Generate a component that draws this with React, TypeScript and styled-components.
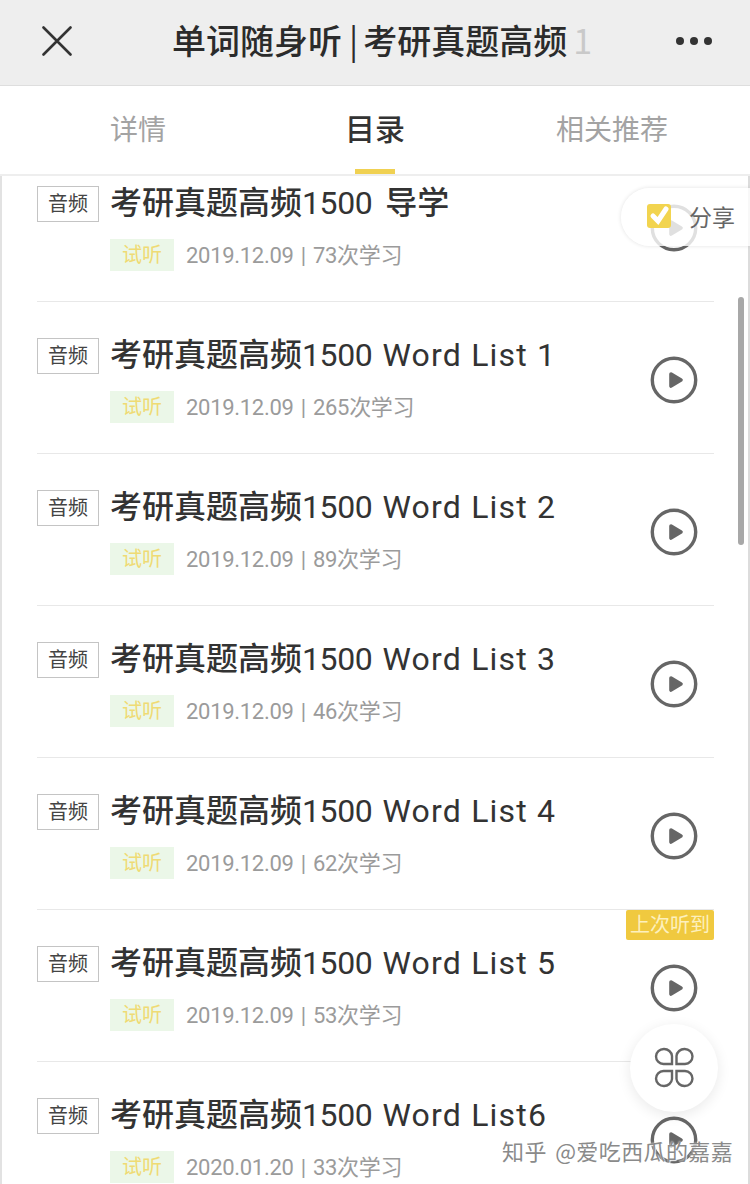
import React from 'react';
import styled, { createGlobalStyle } from 'styled-components';

const GlobalStyle = createGlobalStyle`
    html, body {
        margin: 0;
        padding: 0;
        background: #fff;
        font-family: Roboto, "Noto Sans CJK SC", "Liberation Sans", sans-serif;
    }
`;

// --- DATA ---
interface Lesson {
    name: string;
    date: string;
    count: number;
    lastHeard?: boolean;
}

const lessons: Lesson[] = [
    { name: '导学', date: '2019.12.09', count: 73 },
    { name: 'Word List 1', date: '2019.12.09', count: 265 },
    { name: 'Word List 2', date: '2019.12.09', count: 89 },
    { name: 'Word List 3', date: '2019.12.09', count: 46 },
    { name: 'Word List 4', date: '2019.12.09', count: 62 },
    { name: 'Word List 5', date: '2019.12.09', count: 53, lastHeard: true },
    { name: 'Word List6', date: '2020.01.20', count: 33 },
];

// --- STYLED COMPONENTS ---
const Page = styled.div`
    position: relative;
    display: flex;
    flex-direction: column;
    width: 750px;
    height: 1184px;
    overflow: hidden;
    background: #fff;
`;

const NavBar = styled.header`
    display: flex;
    align-items: center;
    flex-shrink: 0;
    height: 86px;
    padding: 0 38px 4px 42px;
    box-sizing: border-box;
    background: #eeeeee;
    border-bottom: 1px solid #dedede;
`;

const CloseIcon = styled.svg`
    flex-shrink: 0;
    width: 30px;
    height: 30px;
`;

const NavTitle = styled.div`
    margin-left: 100px;
    padding-bottom: 2px;
    font-family: "Noto Sans CJK SC", sans-serif;
    font-size: 34px;
    line-height: 46px;
    font-weight: 500;
    white-space: nowrap;
    color: #2b2b2b;
`;

const Divider = styled.span`
    margin: 0 5px 0 7px;
    font-weight: 400;
`;

const FadedChar = styled.span`
    margin-left: 6px;
    font-weight: 400;
    color: #c9c9c9;
`;

const MoreDots = styled.div`
    display: flex;
    gap: 6px;
    margin-left: auto;
`;

const Dot = styled.span`
    width: 8px;
    height: 8px;
    border-radius: 50%;
    background: #333;
`;

const TabRow = styled.nav`
    display: grid;
    grid-template-columns: repeat(3, 237px);
    justify-content: center;
    flex-shrink: 0;
    height: 90px;
    box-sizing: border-box;
    border-bottom: 2px solid #eeeeee;
`;

const TabItem = styled.div<{ $active?: boolean }>`
    position: relative;
    display: flex;
    justify-content: center;
    align-items: center;
    padding-bottom: ${p => (p.$active ? '7px' : '5px')};
    font-family: "Noto Sans CJK SC", sans-serif;
    font-size: ${p => (p.$active ? '30px' : '28px')};
    font-weight: ${p => (p.$active ? 500 : 400)};
    color: ${p => (p.$active ? '#333' : '#a3a3a3')};

    &::after {
        content: '';
        display: ${p => (p.$active ? 'block' : 'none')};
        position: absolute;
        left: 98px;
        bottom: 0;
        width: 40px;
        height: 5px;
        background: #f0d152;
    }
`;

const ListViewport = styled.main`
    flex: 1;
    min-height: 0;
    overflow: hidden;
    border-left: 2px solid #e2e2e2;
    border-right: 2px solid #dcdcdc;
`;

const List = styled.div`
    margin: -26px 34px 0 35px;
`;

const Row = styled.div`
    position: relative;
    display: flex;
    height: 152px;
    box-sizing: border-box;
    padding-top: 36px;
    border-bottom: 1px solid #e8e8e8;
`;

const TypeTag = styled.div`
    display: flex;
    justify-content: center;
    align-items: center;
    flex-shrink: 0;
    width: 62px;
    height: 36px;
    box-sizing: border-box;
    padding-bottom: 3px;
    border: 1px solid #c4c4c4;
    font-size: 20px;
    color: #444;
`;

const RowBody = styled.div`
    flex: 1;
    margin-left: 11px;
    min-width: 0;
`;

const RowTitle = styled.div`
    height: 36px;
    font-size: 32px;
    line-height: 34px;
    font-weight: 500;
    color: #333;
    white-space: nowrap;
`;

const TitleNumber = styled.span`
    font-weight: 400;
    letter-spacing: -0.4px;
`;

const TitleName = styled.span<{ $latin: boolean }>`
    margin-left: ${p => (p.$latin ? '1px' : '5px')};
    letter-spacing: ${p => (p.$latin ? '1.2px' : '0')};
    font-weight: ${p => (p.$latin ? 400 : 500)};
`;

const RowMeta = styled.div`
    display: flex;
    align-items: center;
    gap: 12px;
    height: 32px;
    margin-top: 17px;
`;

const TrialBadge = styled.span`
    display: flex;
    justify-content: center;
    align-items: center;
    width: 64px;
    height: 32px;
    box-sizing: border-box;
    padding-bottom: 3px;
    background: #ebf7e8;
    font-size: 20px;
    color: #efdb74;
`;

const MetaText = styled.span`
    padding-bottom: 4px;
    font-size: 22px;
    letter-spacing: -0.3px;
    word-spacing: 2px;
    color: #9b9b9b;
`;

const PlayButton = styled.svg`
    flex-shrink: 0;
    width: 48px;
    height: 48px;
    margin: 18px 16px 0 0;
`;

const LastHeard = styled.div`
    position: absolute;
    top: 0;
    right: 0;
    display: flex;
    justify-content: center;
    align-items: center;
    width: 88px;
    height: 30px;
    box-sizing: border-box;
    padding-bottom: 3px;
    border-radius: 2px;
    background: #f0c93f;
    font-size: 20px;
    color: #fdf0bd;
`;

const SharePill = styled.div`
    position: absolute;
    top: 188px;
    right: 0;
    display: flex;
    align-items: center;
    gap: 17px;
    width: 129px;
    height: 58px;
    padding: 0 0 3px 25px;
    box-sizing: border-box;
    border-radius: 29px 0 0 29px;
    background: rgba(255, 255, 255, 0.8);
    box-shadow: 0 0 4px rgba(0, 0, 0, 0.12);
    font-size: 23px;
    color: #666;
`;

const ScrollThumb = styled.div`
    position: absolute;
    top: 297px;
    left: 738px;
    width: 6px;
    height: 248px;
    border-radius: 3px;
    background: #a8a8a8;
`;

const FloatingMenu = styled.div`
    position: absolute;
    top: 1024px;
    left: 630px;
    display: flex;
    justify-content: center;
    align-items: center;
    width: 88px;
    height: 88px;
    border-radius: 50%;
    background: #fff;
    box-shadow: 0 3px 14px rgba(0, 0, 0, 0.09);
`;

const Watermark = styled.div`
    position: absolute;
    top: 1134px;
    left: 502px;
    font-family: "Noto Sans CJK SC", sans-serif;
    font-size: 22px;
    line-height: 32px;
    letter-spacing: 0.4px;
    word-spacing: 3px;
    white-space: nowrap;
    color: #8a8a8a;
    text-shadow: 0 0 2px #fff, 1px 1px 1px rgba(255, 255, 255, 0.9);
`;

// --- ICONS ---
const PlayIcon = () => (
    <PlayButton viewBox="0 0 48 48">
        <circle cx="24" cy="24" r="21.7" fill="none" stroke="#666" strokeWidth="3.4" />
        <path d="M21 18 L31 24 L21 30 Z" fill="#666" stroke="#666" strokeWidth="3.6" strokeLinejoin="round" />
    </PlayButton>
);

const ShareIcon = () => (
    <svg width="26" height="26" viewBox="0 0 26 26">
        <rect x="1" y="1" width="24" height="24" rx="3" fill="#f2d44f" />
        <path d="M7 13 L12 18 L20 6" fill="none" stroke="#fff" strokeWidth="5" strokeLinecap="round" />
    </svg>
);

const CloverIcon = () => (
    <svg width="44" height="44" viewBox="0 0 44 44" fill="none" stroke="#666" strokeWidth="2.4">
        <path d="M20 18 H11.5 a8 7.5 0 1 1 8.5 -8 Z" />
        <path d="M24.5 18 H33 a8 7.5 0 1 0 -8.5 -8 Z" />
        <path d="M20 25 H11.5 a8 7.5 0 1 0 8.5 8 Z" />
        <path d="M24.5 25 H33 a8 7.5 0 1 1 -8.5 8 Z" />
    </svg>
);

export default function App() {
    return (
        <Page>
            <GlobalStyle />
            <NavBar>
                <CloseIcon viewBox="0 0 30 30" stroke="#333" strokeWidth="2.6" strokeLinecap="round">
                    <path d="M1.5 1.5 L28.5 28.5 M28.5 1.5 L1.5 28.5" />
                </CloseIcon>
                <NavTitle>
                    单词随身听<Divider>|</Divider>考研真题高频<FadedChar>1</FadedChar>
                </NavTitle>
                <MoreDots>
                    <Dot />
                    <Dot />
                    <Dot />
                </MoreDots>
            </NavBar>

            <TabRow>
                <TabItem>详情</TabItem>
                <TabItem $active>目录</TabItem>
                <TabItem>相关推荐</TabItem>
            </TabRow>

            <ListViewport>
                <List>
                    {lessons.map(lesson => (
                        <Row key={lesson.name}>
                            {lesson.lastHeard && <LastHeard>上次听到</LastHeard>}
                            <TypeTag>音频</TypeTag>
                            <RowBody>
                                <RowTitle>
                                    考研真题高频<TitleNumber>1500</TitleNumber>
                                    <TitleName $latin={lesson.name.startsWith('Word')}> {lesson.name}</TitleName>
                                </RowTitle>
                                <RowMeta>
                                    <TrialBadge>试听</TrialBadge>
                                    <MetaText>
                                        {lesson.date} | {lesson.count}次学习
                                    </MetaText>
                                </RowMeta>
                            </RowBody>
                            <PlayIcon />
                        </Row>
                    ))}
                </List>
            </ListViewport>

            <SharePill>
                <ShareIcon />
                分享
            </SharePill>
            <ScrollThumb />
            <FloatingMenu>
                <CloverIcon />
            </FloatingMenu>
            <Watermark>知乎 @爱吃西瓜的嘉嘉</Watermark>
        </Page>
    );
}
